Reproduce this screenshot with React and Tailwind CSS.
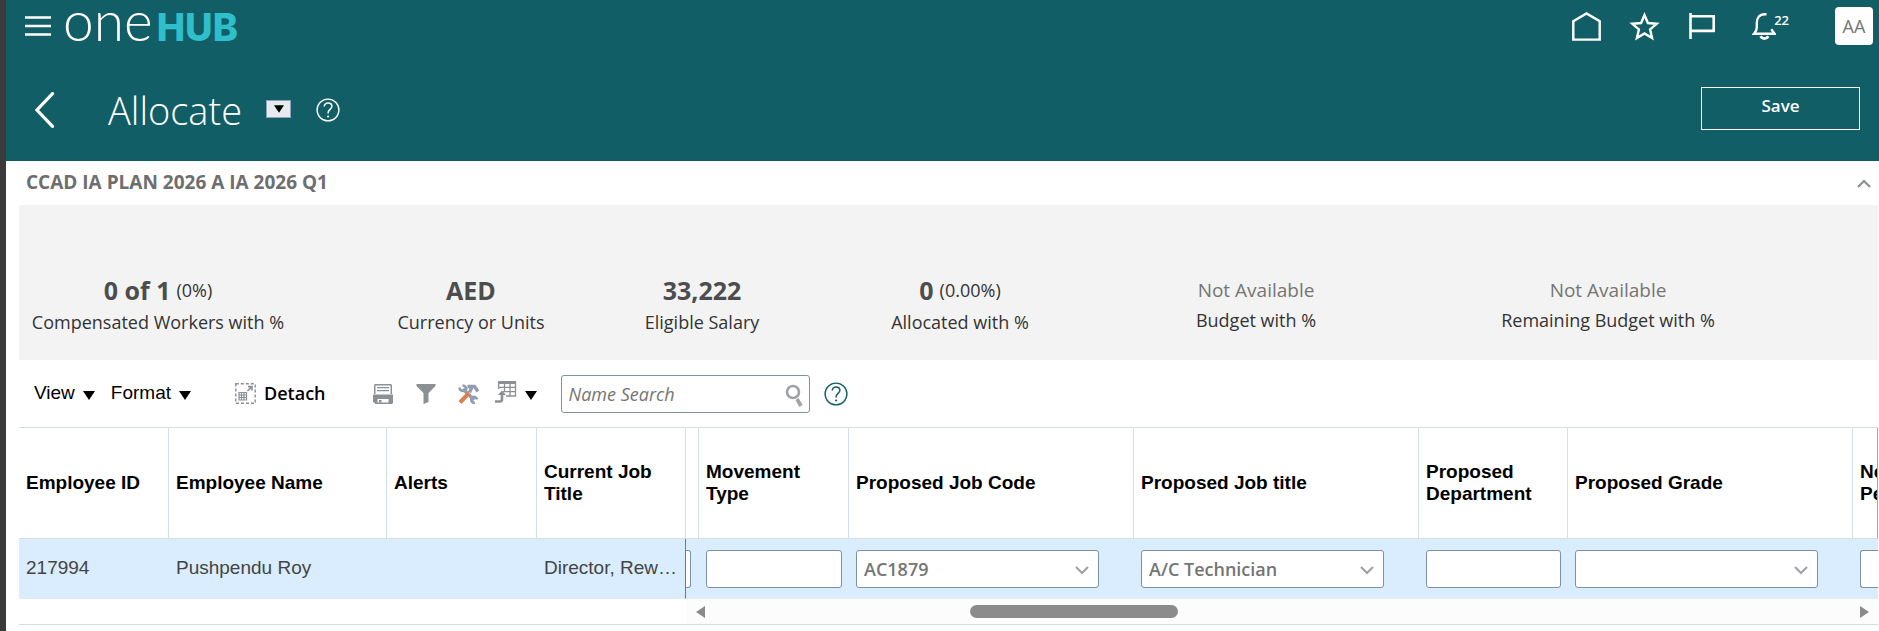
import React from "react";

const segoe = "font-['Open_Sans',sans-serif]";
const arial = "font-['Liberation_Sans',sans-serif]";

function Triangle({ className = "" }) {
  return (
    <svg viewBox="0 0 12 9" className={`h-[9px] w-3 ${className}`} aria-hidden="true">
      <path d="M0 0h12L6 9z" fill="#000" />
    </svg>
  );
}

function Help({ className = "" }) {
  return (
    <svg viewBox="0 0 24 24" className={`size-6 ${className}`} fill="none" stroke="currentColor" aria-hidden="true">
      <circle cx="12" cy="12" r="10.9" strokeWidth="1.4" />
      <path d="M8.2 8.6C8.2 6.4 9.9 5 12 5s3.9 1.3 3.9 3.3c0 2.9-3.8 3.3-3.8 6.4v.8" strokeWidth="1.5" />
      <circle cx="12.1" cy="18.5" r="1.1" fill="currentColor" stroke="none" />
    </svg>
  );
}

function Header() {
  return (
    <header className="bg-[#125e66] text-white">
      <div className="flex h-[52px] items-start justify-between">
        <div className="flex items-start pl-[19px]">
          <button aria-label="Navigator" className="mt-4">
            <svg viewBox="0 0 26 20" className="h-5 w-[26px]" aria-hidden="true">
              <path d="M0 1.5h26M0 10h26M0 18.5h26" stroke="#fff" strokeWidth="2.6" />
            </svg>
          </button>
          <a href="#home" aria-label="oneHUB" className="ml-3 flex items-baseline leading-[40px]">
            <span className="font-['Lato',sans-serif] text-[55px] font-light">one</span>
            <span className="ml-1 font-['Inter',sans-serif] text-[38px] font-extrabold text-[#2fbfca]">HUB</span>
          </a>
        </div>
        <nav className="flex items-start pr-1.5" aria-label="Global">
          <button aria-label="Home" className="mt-3">
            <svg viewBox="0 0 29 29" className="size-[29px]" fill="none" stroke="#fff" strokeWidth="2.4" aria-hidden="true">
              <path d="M1.3 9.3L14.5 1.4l13.2 7.9v18.3H1.3z" />
            </svg>
          </button>
          <button aria-label="Favorites" className="ml-7 mt-3">
            <svg viewBox="0 0 31 29" className="h-[29px] w-[31px]" fill="none" stroke="#fff" strokeWidth="2.4" aria-hidden="true">
              <path d="M15.5 3l3.4 8 8.8.8-6.6 5.6 2 8.6-7.6-4.5L7.9 26l2-8.6-6.6-5.6 8.8-.8z" />
            </svg>
          </button>
          <button aria-label="Watchlist" className="ml-7 mt-3">
            <svg viewBox="0 0 28 28" className="size-7" fill="none" stroke="#fff" strokeWidth="2.6" aria-hidden="true">
              <path d="M2.5 1v26M2.5 4.3h23.2v14.6H2.5" />
            </svg>
          </button>
          <button aria-label="Notifications, 22 unread" className="ml-9 mt-3 flex items-start">
            <svg viewBox="0 0 24 28" className="h-7 w-6" fill="none" stroke="#fff" strokeWidth="2.4" aria-hidden="true">
              <path d="M14.5 2.3h-2C7.5 2.3 4.8 6 4.8 11v4.5c0 2-.6 4-2.8 6.3h20.5l-3.2-4.5" />
              <path d="M8.5 24.3c1.8 3 6 3 7.8 0" strokeWidth="2.8" />
            </svg>
            <span className="-ml-0.5 text-[13px] font-semibold leading-4">22</span>
          </button>
          <button className="ml-[46px] mt-[7px] flex size-[38px] items-center justify-center rounded bg-white text-[18px] text-[#757575]">
            AA
          </button>
        </nav>
      </div>
      <div className="flex h-[109px] items-start justify-between pl-[29px] pr-[19px]">
        <div className="flex items-start">
          <button aria-label="Back" className="mt-10">
            <svg viewBox="0 0 20 36" className="h-9 w-5" fill="none" stroke="#fff" strokeWidth="3.2" strokeLinecap="round" aria-hidden="true">
              <path d="M17.5 1.6L2 18l15.5 16.4" />
            </svg>
          </button>
          <h1 className="ml-[53px] mt-8 text-[38px] font-light leading-[52px]">Allocate</h1>
          <button aria-label="Title actions" className="ml-6 mt-12 flex h-[18px] w-[25px] items-center justify-center border border-[#8ea3b5] bg-[#e7eaee]">
            <svg viewBox="0 0 12 9" className="h-2 w-2.5" aria-hidden="true">
              <path d="M0 0h12L6 9z" />
            </svg>
          </button>
          <button aria-label="Help" className="ml-[25px] mt-[46px]">
            <Help />
          </button>
        </div>
        <button className="mt-[35px] h-[43px] w-[159px] border border-white pb-1.5 text-[17px] font-semibold">Save</button>
      </div>
    </header>
  );
}

const stats = [
  { value: "0 of 1", note: "(0%)", label: "Compensated Workers with %" },
  { value: "AED", label: "Currency or Units" },
  { value: "33,222", label: "Eligible Salary" },
  { value: "0", note: "(0.00%)", label: "Allocated with %" },
  { label: "Budget with %" },
  { label: "Remaining Budget with %" },
];

function Summary() {
  return (
    <section className="pl-[13px] pr-px">
      <div className="flex h-11 items-center justify-between px-[7px]">
        <h2 className="pb-0.5 text-[19px] font-bold leading-6 text-[#6e6e6e]">CCAD IA PLAN 2026 A IA 2026 Q1</h2>
        <button aria-label="Collapse summary">
          <svg viewBox="0 0 14 9" className="h-[9px] w-3.5" fill="none" stroke="#8b9095" strokeWidth="2.2" aria-hidden="true">
            <path d="M1 8l6-6 6 6" />
          </svg>
        </button>
      </div>
      <dl className="grid h-[155px] grid-cols-[278fr_348fr_114fr_402fr_190fr_514fr] bg-[#f3f3f3] pr-[13px] pt-[69px]">
        {stats.map((s) => (
          <div key={s.label} className="flex min-w-0 flex-col-reverse items-center justify-end whitespace-nowrap">
            <dt className={`text-[18px] leading-8 text-[#333] ${s.value ? "" : "-mt-0.5"}`}>{s.label}</dt>
            <dd className="flex h-8 items-center gap-1.5 leading-8">
              {s.value ? (
                <span className="text-[25px] font-bold text-[#4d4d4d]">{s.value}</span>
              ) : (
                <span className="text-[19px] text-[#757575]">Not Available</span>
              )}
              {s.note && <span className="text-[18px] text-[#333]">{s.note}</span>}
            </dd>
          </div>
        ))}
      </dl>
    </section>
  );
}

function Toolbar() {
  return (
    <div className="flex h-[67px] items-center pl-7">
      <button className={`flex items-center gap-2 text-[19px] ${arial}`}>
        View <Triangle className="mt-1" />
      </button>
      <button className={`ml-4 flex items-center gap-2 text-[19px] ${arial}`}>
        Format <Triangle className="mt-1" />
      </button>
      <button className="ml-11 flex items-center gap-2 text-[18px] font-semibold">
        <svg viewBox="0 0 21 21" className="size-[21px]" fill="none" stroke="#8b9095" aria-hidden="true">
          <path d="M.8.8h19.4v19.4H.8z" strokeWidth="1.4" strokeDasharray="3 2" />
          <path d="M4 9.5h7.5v7.5H4zM4 12h7.5M4 14.5h7.5M6.5 9.5V17M9 9.5V17" strokeWidth="1.2" />
          <path d="M12.5 8l4-4M13 3.6h4v4" strokeWidth="1.6" />
        </svg>
        Detach
      </button>
      <button aria-label="Save" className="ml-[47px]">
        <svg viewBox="0 0 20 20" className="size-5" aria-hidden="true">
          <path d="M2 0h16l1 1v9H1V1z" fill="#8b9095" />
          <path d="M2.5 1.5h15v9h-15z" fill="#fff" />
          <path d="M4 3.6h12M4 6.6h12" stroke="#8b9095" strokeWidth="1.3" />
          <path d="M0 10.5h20V19l-1 1H2.5L0 17.5z" fill="#8b9095" />
          <path d="M4.5 15h11v3.5h-11z" fill="#fff" />
          <path d="M6 16h2.5v2.500H6z" fill="#8b9095" />
        </svg>
      </button>
      <button aria-label="Query by example" className="ml-[23px]">
        <svg viewBox="0 0 20 20" className="size-5" fill="#8b9095" aria-hidden="true">
          <path d="M.5 0h19v2L12.5 9v9L7.5 20V9L.5 2z" />
        </svg>
      </button>
      <button aria-label="Configure" className="ml-[22px]">
        <svg viewBox="0 0 21 20" className="h-5 w-[21px]" fill="none" aria-hidden="true">
          <path d="M5 5l11 11" stroke="#939db0" strokeWidth="3.6" />
          <path d="M1.5 3.5C1.5 7 5.5 8 7.5 6S7 1.5 4.5 1.5" stroke="#939db0" strokeWidth="2.6" />
          <path d="M19 15.5c-.5-3-4.5-3.5-5.5-1s1 4.5 3.5 4.5" stroke="#939db0" strokeWidth="2.6" />
          <path d="M9.5 2.5h7l3.5 5M14.5 1.5l-3 7" stroke="#939db0" strokeWidth="3.4" />
          <path d="M2 18.5L11 9" stroke="#d9804f" strokeWidth="4" />
        </svg>
      </button>
      <button aria-label="Freeze" className="-mt-1 ml-4">
        <svg viewBox="0 0 22 22" className="size-[22px]" fill="none" stroke="#8b9095" aria-hidden="true">
          <path d="M3 1.5h18" strokeWidth="3" />
          <path d="M3 6.3h18M8 10.6h13M11 15h10M3.6 1v7M9.5 1v9M15 1v14M20.5 1v14.5" strokeWidth="1.3" />
          <path d="M0 20.5h5c1.5 0 2-1 2-2.5v-5" strokeWidth="2.6" />
          <path d="M3 14l4-4.5L11 14z" fill="#8b9095" stroke="none" />
        </svg>
      </button>
      <button aria-label="More freeze options" className="ml-2">
        <Triangle className="mt-1" />
      </button>
      <div className="ml-6 flex h-[38px] w-[249px] items-center rounded-[3px] border border-[#7d929f] bg-white">
        <input
          aria-label="Name Search"
          placeholder="Name Search"
          className="min-w-0 flex-1 bg-transparent pl-[7px] pt-0.5 text-[18px] font-medium italic outline-none placeholder:text-[#757575]"
        />
        <button aria-label="Search" className="mr-1.5 mt-1">
          <svg viewBox="0 0 18 23" className="h-[23px] w-[18px]" fill="none" aria-hidden="true">
            <circle cx="8" cy="8" r="6" stroke="#a0a3a6" strokeWidth="2.6" />
            <path d="M12 15l4 7" stroke="#a0a3a6" strokeWidth="3.6" />
          </svg>
        </button>
      </div>
      <button aria-label="Search help" className="ml-3.5 text-[#125e66]">
        <Help />
      </button>
    </div>
  );
}

const columns = [
  { title: "Employee ID", width: "w-[150px]", text: "217994" },
  { title: "Employee Name", width: "w-[218px]", text: "Pushpendu Roy" },
  { title: "Alerts", width: "w-[150px]", text: "" },
  { title: "Current Job Title", width: "w-[149px]", text: "Director, Reward" },
  { title: "", width: "w-[13px]", kind: "edge" },
  { title: "Movement Type", width: "w-[150px]", kind: "input" },
  { title: "Proposed Job Code", width: "w-[285px]", kind: "select", text: "AC1879" },
  { title: "Proposed Job title", width: "w-[285px]", kind: "select", text: "A/C Technician" },
  { title: "Proposed Department", width: "w-[149px]", kind: "input" },
  { title: "Proposed Grade", width: "w-[285px]", kind: "select", text: "" },
  { title: "Ne Pe", width: "w-auto", kind: "clipped" },
];

const field = "block h-[38px] border border-[#7d929f] bg-white outline-none";

function Cell({ column }) {
  const { kind, title, text } = column;
  if (kind === "edge") {
    return <input aria-label="Scrolled field" className={`${field} w-[5px] rounded-r-[3px] border-l-0`} />;
  }
  if (kind === "input") {
    return (
      <div className="px-[7px]">
        <input aria-label={title} className={`${field} w-full rounded-[3px]`} />
      </div>
    );
  }
  if (kind === "clipped") {
    return (
      <div className="pl-[7px]">
        <input aria-label="Next field" className={`${field} w-full rounded-l-[3px] border-r-0`} />
      </div>
    );
  }
  if (kind === "select") {
    return (
      <div className="relative ml-[7px] mr-[35px]">
        <select
          aria-label={title}
          defaultValue={text}
          className={`${field} w-full appearance-none rounded-[3px] pl-[7px] pt-0.5 text-[18px] font-semibold text-[#757575] ${segoe}`}
        >
          <option value={text}>{text}</option>
        </select>
        <svg viewBox="0 0 14 9" className="pointer-events-none absolute right-2.5 top-4 h-[9px] w-3.5" fill="none" stroke="#a0a3a6" strokeWidth="2.2" aria-hidden="true">
          <path d="M1 1l6 6 6-6" />
        </svg>
      </div>
    );
  }
  return <div className="truncate pl-[7px] pr-1.5">{text}</div>;
}

function Grid() {
  return (
    <div className="ml-[13px] mr-px border-b border-[#d6dfe6]">
      <table className={`w-full table-fixed border-separate border-spacing-0 border-t border-[#d6dfe6] text-[19px] ${arial}`}>
        <thead>
          <tr className="h-[111px]">
            {columns.map((c, i) => (
              <th
                key={i}
                scope="col"
                className={`${c.width} overflow-hidden border-b border-r border-[#d6dfe6] pl-[7px] text-left font-bold leading-[22px] text-black last:border-r-[#a0a8ae] ${c.kind === "input" ? "pr-3" : ""}`}
              >
                {c.title}
              </th>
            ))}
          </tr>
        </thead>
        <tbody>
          <tr className="h-[60px] bg-[#d9edff] text-[#444]">
            {columns.map((c, i) => (
              <td key={i} className={`overflow-hidden border-b border-b-[#e6ebef] ${i === 3 ? "border-r border-r-[#00a5c0]" : ""}`}>
                <Cell column={c} />
              </td>
            ))}
          </tr>
        </tbody>
      </table>
      <div className="ml-[668px] flex h-[25px] items-center justify-between bg-[#fcfcfc] px-[9px]">
        <button aria-label="Scroll left">
          <svg viewBox="0 0 9 12" className="h-3 w-[9px]" fill="#8b8b8b" aria-hidden="true">
            <path d="M9 0v12L0 6z" />
          </svg>
        </button>
        <div className="grid flex-1 grid-cols-[265fr_208fr_682fr]">
          <div className="col-start-2 h-[13px] rounded-full bg-[#8b8b8b]" />
        </div>
        <button aria-label="Scroll right">
          <svg viewBox="0 0 9 12" className="h-3 w-[9px]" fill="#8b8b8b" aria-hidden="true">
            <path d="M0 0v12l9-6z" />
          </svg>
        </button>
      </div>
    </div>
  );
}

export default function App() {
  return (
    <div className={`min-h-screen overflow-hidden border-l-[6px] border-[#3a3a3a] bg-white ${segoe}`}>
      <Header />
      <main>
        <Summary />
        <Toolbar />
        <Grid />
      </main>
    </div>
  );
}
